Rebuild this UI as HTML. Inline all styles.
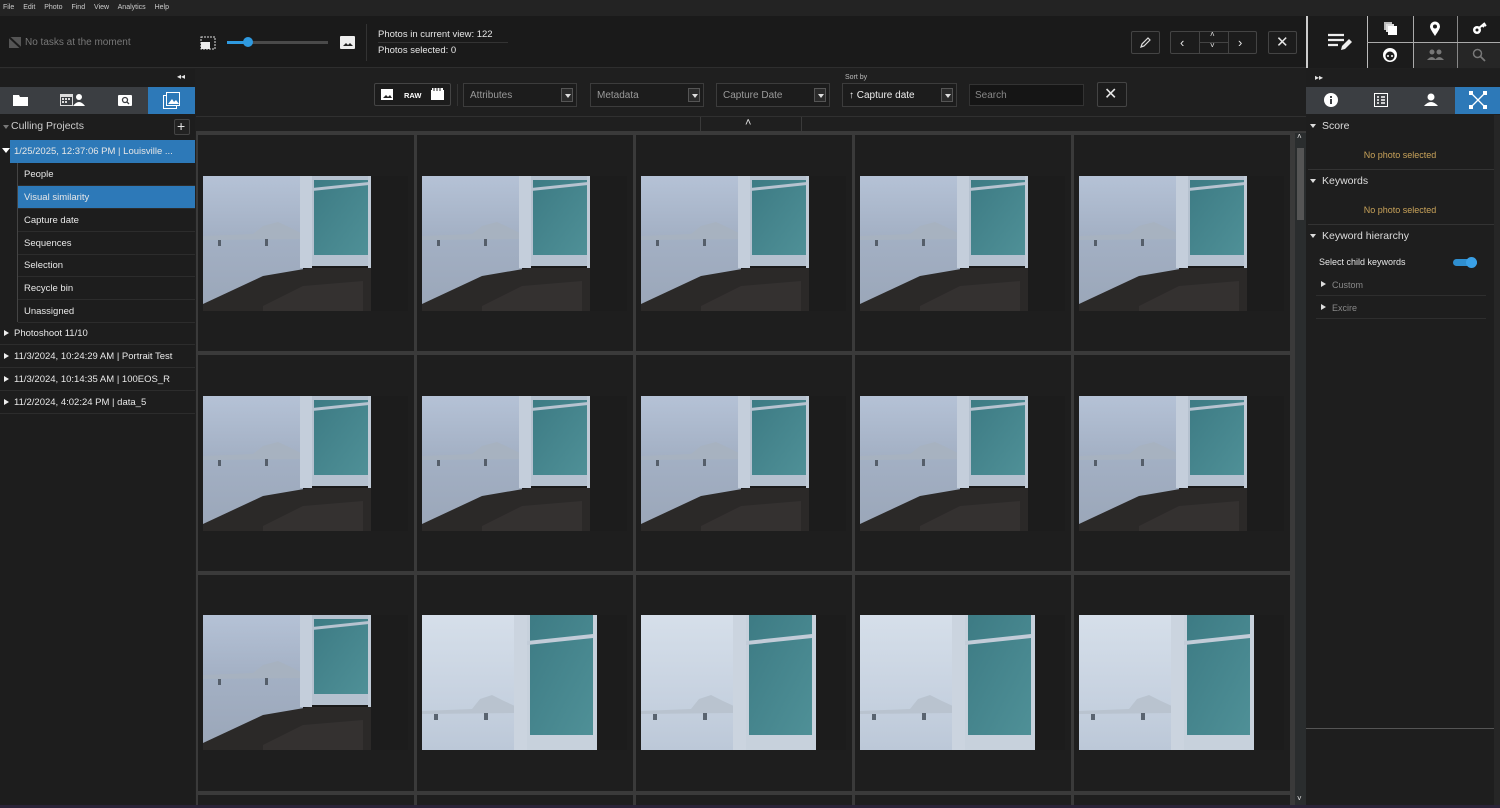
<!DOCTYPE html>
<html><head><meta charset="utf-8"><style>
*{margin:0;padding:0;box-sizing:border-box}
body{width:1500px;height:808px;background:#1f1f1f;font-family:"Liberation Sans",sans-serif;color:#ddd;position:relative;overflow:hidden}
.a{position:absolute}
.t{font-size:9.5px;color:#e6e6e6;white-space:nowrap}
.dd{position:absolute;top:83px;height:24px;border:1px solid #3c3c3c;background:#1c1c1c;font-size:10px;color:#9a9a9a;padding:6px 6px;}
.dd b{position:absolute;right:3px;top:4px;width:12px;height:14px;border:1px solid #555;background:#2a2a2a}
.dd b:after{content:"";position:absolute;left:3px;top:5px;border:3px solid transparent;border-top:4px solid #ddd}
.btn{position:absolute;border:1px solid #444;background:#1c1c1c;border-radius:2px}
.row{position:absolute;left:18px;width:177px;height:23px;border-bottom:1px solid #2c2c2c;font-size:9.5px;color:#e8e8e8;padding:6px 6px}
.prow{position:absolute;left:0;width:195px;height:23px;border-bottom:1px solid #2c2c2c;font-size:9.5px;color:#e8e8e8;padding:6px 14px}
.prow:before{content:"";position:absolute;left:4px;top:8px;border:3.5px solid transparent;border-left:5px solid #eee}
.sec{position:absolute;left:1310px;font-size:10.5px;color:#ddd;padding-left:12px}
.sec:before{content:"";position:absolute;left:0;top:4px;border:3.5px solid transparent;border-top:4.5px solid #ddd}
.nps{position:absolute;left:1310px;width:180px;text-align:center;font-size:9px;color:#c9a35a}
</style></head><body>
<!-- menu -->
<div class="a" style="left:0;top:0;width:1500px;height:16px;background:#232323"></div>
<div class="a" style="left:3px;top:4px;font-size:7px;color:#ccc;word-spacing:7px">File Edit Photo Find View Analytics Help</div>
<!-- top toolbar -->
<div class="a" style="left:0;top:16px;width:1306px;height:52px;background:#1a1a1a;border-bottom:1px solid #2e2e2e"></div>
<svg class="a" style="left:8px;top:36px" width="14" height="13"><rect x="1" y="1" width="12" height="11" fill="#555"/><line x1="0" y1="0" x2="14" y2="13" stroke="#1a1a1a" stroke-width="2"/></svg>
<div class="a t" style="left:25px;top:37px;color:#777;font-size:10px">No tasks at the moment</div>
<svg class="a" style="left:200px;top:36px" width="16" height="14"><rect x="1" y="1" width="14" height="12" fill="none" stroke="#ddd" stroke-dasharray="2 1"/><rect x="1" y="6" width="9" height="7" fill="#eee"/></svg>
<div class="a" style="left:227px;top:41px;width:101px;height:3px;background:#4a4a4a"></div>
<div class="a" style="left:227px;top:41px;width:22px;height:3px;background:#2f9ae0"></div>
<div class="a" style="left:243px;top:37px;width:10px;height:10px;border-radius:50%;background:#2f9ae0"></div>
<svg class="a" style="left:340px;top:36px" width="15" height="13"><rect width="15" height="13" rx="1" fill="#eee"/><path d="M3 10 L6 7 L8 9 L10 7 L13 10Z" fill="#222"/></svg>
<div class="a" style="left:366px;top:24px;width:1px;height:37px;background:#333"></div>
<div class="a t" style="left:378px;top:29px">Photos in current view: 122</div>
<div class="a" style="left:378px;top:42px;width:130px;height:1px;background:#333"></div>
<div class="a t" style="left:378px;top:45px">Photos selected: 0</div>
<div class="btn" style="left:1131px;top:31px;width:29px;height:23px"></div>
<svg class="a" style="left:1139px;top:36px" width="13" height="13"><path d="M2 11 L3 8 L9 2 L11 4 L5 10Z" fill="none" stroke="#ddd" stroke-width="1.2"/></svg>
<div class="btn" style="left:1170px;top:31px;width:87px;height:23px"></div>
<div class="a" style="left:1199px;top:31px;width:1px;height:23px;background:#444"></div>
<div class="a" style="left:1228px;top:31px;width:1px;height:23px;background:#444"></div>
<div class="a" style="left:1199px;top:42px;width:29px;height:1px;background:#444"></div>
<div class="a t" style="left:1180px;top:35px;font-size:13px">‹</div>
<div class="a t" style="left:1238px;top:35px;font-size:13px">›</div>
<div class="a t" style="left:1210px;top:30px;font-size:8px">˄</div>
<div class="a t" style="left:1210px;top:41px;font-size:8px">˅</div>
<div class="btn" style="left:1268px;top:31px;width:29px;height:23px"></div>
<div class="a t" style="left:1276px;top:33px;font-size:15px">✕</div>
<!-- right top icons -->
<div class="a" style="left:1306px;top:16px;width:194px;height:52px;background:#1b1b1b"></div>
<div class="a" style="left:1413px;top:42px;width:87px;height:26px;background:#262626"></div>
<div class="a" style="left:1306px;top:16px;width:2px;height:52px;background:#ccc"></div>
<div class="a" style="left:1367px;top:16px;width:1px;height:52px;background:#bbb"></div>
<div class="a" style="left:1413px;top:16px;width:1px;height:52px;background:#aaa"></div>
<div class="a" style="left:1457px;top:16px;width:1px;height:52px;background:#888"></div>
<div class="a" style="left:1367px;top:42px;width:133px;height:1px;background:#aaa"></div>
<svg class="a" style="left:1327px;top:32px" width="26" height="20"><path d="M1 3h16M1 8h16M1 13h10" stroke="#eee" stroke-width="2.2"/><path d="M14 18 L15 14 L22 7 L25 10 L18 17Z" fill="#eee"/></svg>
<svg class="a" style="left:1383px;top:21px" width="15" height="15"><rect x="1" y="1" width="8" height="8" fill="#bbb"/><rect x="3" y="3" width="8" height="8" fill="#ddd"/><rect x="5" y="5" width="9" height="9" fill="#fff"/></svg>
<svg class="a" style="left:1429px;top:21px" width="12" height="15"><path d="M6 15 C2 9 1 7 1 5.5 A5 5 0 0 1 11 5.5 C11 7 10 9 6 15Z" fill="#fff"/><circle cx="6" cy="5.5" r="2" fill="#1b1b1b"/></svg>
<svg class="a" style="left:1472px;top:21px" width="15" height="14"><circle cx="5" cy="9" r="4" fill="#fff"/><circle cx="5" cy="9" r="1.5" fill="#1b1b1b"/><path d="M7 7 L13 2 M10 4 L12 6 M12 3 L14 5" stroke="#fff" stroke-width="2"/></svg>
<svg class="a" style="left:1382px;top:47px" width="16" height="16"><circle cx="8" cy="8" r="7" fill="#fff"/><circle cx="8" cy="9" r="4.5" fill="#1b1b1b"/><circle cx="6" cy="9" r="1" fill="#fff"/><circle cx="10" cy="9" r="1" fill="#fff"/></svg>
<svg class="a" style="left:1427px;top:49px" width="18" height="11"><circle cx="5" cy="3" r="2.5" fill="#777"/><circle cx="12" cy="3" r="2.5" fill="#777"/><path d="M0 11 Q5 5 9 11Z M8 11 Q12 5 17 11Z" fill="#777"/></svg>
<svg class="a" style="left:1472px;top:48px" width="14" height="14"><circle cx="5.5" cy="5.5" r="4" fill="none" stroke="#777" stroke-width="1.5"/><path d="M8.5 8.5 L13 13" stroke="#777" stroke-width="1.8"/></svg>
<!-- left panel -->
<div class="a" style="left:0;top:69px;width:195px;height:739px;background:#1d1d1d"></div>
<div class="a t" style="left:177px;top:72px;font-size:8px">◂◂</div>
<div class="a" style="left:0;top:87px;width:195px;height:27px;background:#3b3e42"></div>
<div class="a" style="left:148px;top:87px;width:47px;height:27px;background:#2d79b8"></div>
<svg class="a" style="left:13px;top:94px" width="15" height="12"><path d="M0 1h6l1 2h8v9H0Z" fill="#fff"/></svg>
<svg class="a" style="left:60px;top:93px" width="26" height="14"><rect x="0" y="1" width="13" height="12" fill="#ddd"/><rect x="1" y="4" width="11" height="8" fill="#3b3e42"/><g fill="#ddd"><rect x="2" y="5" width="2" height="2"/><rect x="5" y="5" width="2" height="2"/><rect x="8" y="5" width="2" height="2"/><rect x="2" y="8" width="2" height="2"/><rect x="5" y="8" width="2" height="2"/></g><circle cx="19" cy="4" r="3" fill="#fff"/><path d="M13 13 Q19 5 25 13Z" fill="#fff"/></svg>
<svg class="a" style="left:118px;top:95px" width="14" height="11"><rect width="14" height="11" rx="1" fill="#fff"/><circle cx="7" cy="5" r="2.5" fill="none" stroke="#3b3e42" stroke-width="1.3"/><path d="M9 7l2 2" stroke="#3b3e42" stroke-width="1.3"/></svg>
<svg class="a" style="left:163px;top:92px" width="17" height="17"><rect x="0.5" y="3.5" width="13" height="13" fill="none" stroke="#fff"/><rect x="3.5" y="0.5" width="13" height="13" fill="#2d79b8" stroke="#fff"/><path d="M5 12 L9 7 L11 10 L13 8 L16 12Z" fill="#fff"/></svg>
<div class="a" style="left:3px;top:125px;border:3px solid transparent;border-top:4px solid #777"></div>
<div class="a" style="left:11px;top:120px;font-size:10.5px;color:#ccc">Culling Projects</div>
<div class="btn" style="left:174px;top:119px;width:16px;height:16px;background:#222"></div>
<div class="a t" style="left:177px;top:118px;font-size:14px">+</div>
<div class="a" style="left:10px;top:140px;width:185px;height:23px;background:#2d79b8"></div>
<div class="a" style="left:2px;top:148px;border:4px solid transparent;border-top:5px solid #fff"></div>
<div class="a t" style="left:14px;top:146px">1/25/2025, 12:37:06 PM | Louisville ...</div>
<div class="a" style="left:17px;top:163px;width:1px;height:159px;background:#444"></div>
<div class="row" style="top:163px">People</div>
<div class="row" style="top:186px;background:#2d79b8">Visual similarity</div>
<div class="row" style="top:209px">Capture date</div>
<div class="row" style="top:232px">Sequences</div>
<div class="row" style="top:254px">Selection</div>
<div class="row" style="top:277px">Recycle bin</div>
<div class="row" style="top:300px">Unassigned</div>
<div class="prow" style="top:322px">Photoshoot 11/10</div>
<div class="prow" style="top:345px">11/3/2024, 10:24:29 AM | Portrait Test</div>
<div class="prow" style="top:368px">11/3/2024, 10:14:35 AM | 100EOS_R</div>
<div class="prow" style="top:391px">11/2/2024, 4:02:24 PM | data_5</div>
<!-- filter bar -->
<div class="a" style="left:196px;top:69px;width:1110px;height:48px;background:#1f1f1f;border-bottom:1px solid #303030"></div>
<div class="btn" style="left:374px;top:83px;width:77px;height:23px"></div>
<svg class="a" style="left:381px;top:89px" width="12" height="11"><rect width="12" height="11" fill="#fff"/><path d="M2 9 L5 6 L7 8 L9 6 L11 9Z" fill="#222"/></svg>
<div class="a" style="left:404px;top:91px;font-size:7.5px;font-weight:bold;color:#fff">RAW</div>
<svg class="a" style="left:431px;top:88px" width="13" height="12"><rect y="2" width="13" height="10" fill="#fff"/><path d="M1 0h11v3H1z" fill="#fff"/><path d="M3 0v3M6 0v3M9 0v3" stroke="#1c1c1c"/></svg>
<div class="a" style="left:457px;top:84px;width:1px;height:22px;background:#333"></div>
<div class="dd" style="left:463px;width:114px">Attributes<b></b></div>
<div class="dd" style="left:590px;width:114px">Metadata<b></b></div>
<div class="dd" style="left:716px;width:114px">Capture Date<b></b></div>
<div class="a" style="left:845px;top:74px;font-size:7px;color:#bbb">Sort by</div>
<div class="dd" style="left:842px;width:115px;color:#eee">↑ Capture date<b></b></div>
<div class="a" style="left:969px;top:84px;width:115px;height:22px;background:#151515;border:1px solid #333;font-size:10px;color:#888;padding:5px 5px">Search</div>
<div class="btn" style="left:1097px;top:82px;width:30px;height:25px"></div>
<div class="a t" style="left:1104px;top:84px;font-size:16px">✕</div>
<div class="a" style="left:196px;top:117px;width:1110px;height:16px;background:#1f1f1f;border-bottom:2px solid #3a3a3a"></div>
<div class="a" style="left:700px;top:117px;width:1px;height:16px;background:#3a3a3a"></div>
<div class="a" style="left:801px;top:117px;width:1px;height:16px;background:#3a3a3a"></div>
<div class="a t" style="left:745px;top:117px;font-size:11px">˄</div>
<!-- grid -->
<svg class="a" style="left:196px;top:133px" width="1099" height="675">
<defs>
<linearGradient id="sky" x1="0" y1="0" x2="0" y2="1"><stop offset="0" stop-color="#b5c2d6"/><stop offset="0.45" stop-color="#a3b0c4"/><stop offset="1" stop-color="#9aa6b8"/></linearGradient>
<linearGradient id="sky2" x1="0" y1="0" x2="0" y2="1"><stop offset="0" stop-color="#d6dfea"/><stop offset="0.6" stop-color="#c7d2e0"/><stop offset="1" stop-color="#bcc8d8"/></linearGradient>
<linearGradient id="gl" x1="0" y1="0" x2="1" y2="1"><stop offset="0" stop-color="#3d7b84"/><stop offset="1" stop-color="#4f9097"/></linearGradient>
<g id="pA">
<rect width="205" height="135" fill="#1a1a1a"/>
<rect width="100" height="135" fill="url(#sky)"/>
<path d="M0 60 L50 58 L60 50 L75 46 L88 52 L100 58 L100 63 L0 64Z" fill="#a7b2c0"/>
<rect x="15" y="64" width="3" height="6" fill="#555e6a"/><rect x="62" y="63" width="3" height="7" fill="#555e6a"/>
<rect x="97" y="0" width="12" height="92" fill="#c4cedb"/>
<rect x="109" y="0" width="57" height="90" fill="#b5c1cf"/>
<rect x="111" y="4" width="54" height="75" fill="url(#gl)"/>
<path d="M109 12 L166 6 L166 9 L109 15Z" fill="#b7c3d0"/>
<rect x="165" y="0" width="3" height="135" fill="#c0cad6"/>
<path d="M0 128 L0 135 L168 135 L168 92 L107 92 L60 100Z" fill="#2b2928"/>
<path d="M60 130 L100 110 L160 105 L160 135 L60 135Z" fill="#343130"/>
<rect x="168" y="0" width="37" height="135" fill="#1c1c1c"/>
</g>
<g id="pB">
<rect width="205" height="135" fill="#1a1a1a"/>
<rect width="95" height="135" fill="url(#sky2)"/>
<path d="M0 96 L50 94 L58 84 L70 80 L82 86 L95 92 L95 98 L0 99Z" fill="#b9c3cf"/>
<rect x="12" y="99" width="4" height="6" fill="#5a6470"/><rect x="62" y="98" width="4" height="7" fill="#5a6470"/>
<rect x="92" y="0" width="13" height="135" fill="#cbd4df"/>
<rect x="105" y="0" width="70" height="135" fill="#c7d1dc"/>
<rect x="108" y="0" width="63" height="120" fill="url(#gl)"/>
<path d="M105 26 L171 19 L171 23 L105 30Z" fill="#c2ccd8"/>
<rect x="175" y="0" width="30" height="135" fill="#1c1c1c"/>
</g>
</defs>
<rect width="1099" height="675" fill="#3a3a3a"/>
<g fill="#1e1e1e">
<rect x="2" y="2" width="216" height="216"/><rect x="221" y="2" width="216" height="216"/><rect x="440" y="2" width="216" height="216"/><rect x="659" y="2" width="216" height="216"/><rect x="878" y="2" width="216" height="216"/>
<rect x="2" y="222" width="216" height="216"/><rect x="221" y="222" width="216" height="216"/><rect x="440" y="222" width="216" height="216"/><rect x="659" y="222" width="216" height="216"/><rect x="878" y="222" width="216" height="216"/>
<rect x="2" y="442" width="216" height="216"/><rect x="221" y="442" width="216" height="216"/><rect x="440" y="442" width="216" height="216"/><rect x="659" y="442" width="216" height="216"/><rect x="878" y="442" width="216" height="216"/>
<rect x="2" y="662" width="216" height="20"/><rect x="221" y="662" width="216" height="20"/><rect x="440" y="662" width="216" height="20"/><rect x="659" y="662" width="216" height="20"/><rect x="878" y="662" width="216" height="20"/>
</g>
<use href="#pA" x="7" y="43"/><use href="#pA" x="226" y="43"/><use href="#pA" x="445" y="43"/><use href="#pA" x="664" y="43"/><use href="#pA" x="883" y="43"/>
<use href="#pA" x="7" y="263"/><use href="#pA" x="226" y="263"/><use href="#pA" x="445" y="263"/><use href="#pA" x="664" y="263"/><use href="#pA" x="883" y="263"/>
<use href="#pA" x="7" y="482"/><use href="#pB" x="226" y="482"/><use href="#pB" x="445" y="482"/><use href="#pB" x="664" y="482"/><use href="#pB" x="883" y="482"/>
</svg>
<!-- scrollbar -->
<div class="a" style="left:1295px;top:133px;width:11px;height:675px;background:#2a2d2e"></div>
<div class="a" style="left:1297px;top:148px;width:7px;height:72px;background:#555"></div>
<div class="a t" style="left:1297px;top:132px;font-size:8px">˄</div>
<div class="a t" style="left:1297px;top:794px;font-size:8px">˅</div>
<!-- right panel -->
<div class="a" style="left:1306px;top:69px;width:194px;height:739px;background:#1e1e1e"></div>
<div class="a t" style="left:1315px;top:73px;font-size:8px">▸▸</div>
<div class="a" style="left:1306px;top:87px;width:194px;height:27px;background:#3b3e42"></div>
<div class="a" style="left:1455px;top:87px;width:45px;height:27px;background:#2d79b8"></div>
<svg class="a" style="left:1324px;top:93px" width="14" height="14"><circle cx="7" cy="7" r="7" fill="#fff"/><rect x="6" y="6" width="2" height="5" fill="#3b3e42"/><rect x="6" y="3" width="2" height="2" fill="#3b3e42"/></svg>
<svg class="a" style="left:1374px;top:93px" width="14" height="14"><rect x="0.5" y="0.5" width="13" height="13" fill="none" stroke="#fff"/><path d="M3 4h2M3 7h2M3 10h2M7 4h4M7 7h4M7 10h4" stroke="#fff" stroke-width="1.5"/></svg>
<svg class="a" style="left:1424px;top:93px" width="14" height="13"><circle cx="7" cy="4" r="3.5" fill="#fff"/><path d="M0 13 Q7 5 14 13Z" fill="#fff"/></svg>
<svg class="a" style="left:1469px;top:91px" width="18" height="18"><path d="M2 2 L16 16 M16 2 L2 16" stroke="#fff" stroke-width="1.3"/><g fill="#fff"><rect x="0" y="0" width="4" height="4"/><rect x="14" y="0" width="4" height="4"/><rect x="0" y="14" width="4" height="4"/><rect x="14" y="14" width="4" height="4"/></g></svg>
<div class="sec" style="top:120px">Score</div>
<div class="nps" style="top:150px">No photo selected</div>
<div class="a" style="left:1308px;top:169px;width:190px;height:1px;background:#333"></div>
<div class="sec" style="top:175px">Keywords</div>
<div class="nps" style="top:205px">No photo selected</div>
<div class="a" style="left:1308px;top:224px;width:190px;height:1px;background:#333"></div>
<div class="sec" style="top:230px">Keyword hierarchy</div>
<div class="a t" style="left:1319px;top:257px;font-size:9px">Select child keywords</div>
<div class="a" style="left:1453px;top:259px;width:24px;height:7px;border-radius:4px;background:#2f8fd0"></div>
<div class="a" style="left:1466px;top:257px;width:11px;height:11px;border-radius:50%;background:#3aa0e6"></div>
<div class="a" style="left:1321px;top:281px;border:3.5px solid transparent;border-left:5px solid #ddd"></div>
<div class="a" style="left:1332px;top:280px;font-size:9px;color:#888">Custom</div>
<div class="a" style="left:1316px;top:295px;width:170px;height:1px;background:#2e2e2e"></div>
<div class="a" style="left:1321px;top:304px;border:3.5px solid transparent;border-left:5px solid #ddd"></div>
<div class="a" style="left:1332px;top:303px;font-size:9px;color:#888">Excire</div>
<div class="a" style="left:1316px;top:318px;width:170px;height:1px;background:#2e2e2e"></div>
<div class="a" style="left:1306px;top:728px;width:188px;height:1px;background:#555"></div>
<div class="a" style="left:1494px;top:115px;width:6px;height:693px;background:#262626"></div>
<div class="a" style="left:0;top:805px;width:1500px;height:3px;background:#2a2338"></div>
</body></html>
